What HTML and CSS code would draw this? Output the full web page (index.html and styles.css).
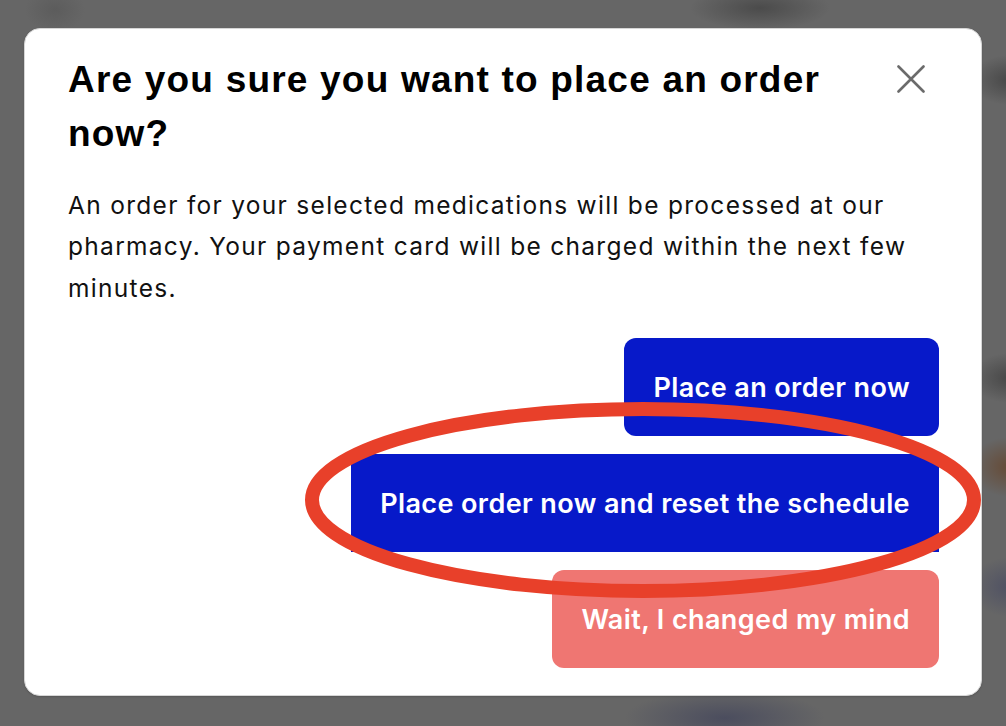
FILE: index.html
```html
<!DOCTYPE html>
<html lang="en">
<head>
<meta charset="utf-8">
<title>Place order</title>
<link rel="stylesheet" href="styles.css">
</head>
<body>
<div class="backdrop">
  <div class="modal" role="dialog">
    <div class="modal-head">
      <h1 class="title">Are you sure you want to place an order now?</h1>
      <button class="close" aria-label="Close">
        <svg width="28" height="28" viewBox="0 0 28 28"><path d="M1.5 1.5 L26.5 26.5 M26.5 1.5 L1.5 26.5" stroke="#6b6b6b" stroke-width="2.6" stroke-linecap="round" fill="none"/></svg>
      </button>
    </div>
    <p class="desc">An order for your selected medications will be processed at our pharmacy. Your payment card will be charged within the next few minutes.</p>
    <div class="actions">
      <button class="btn btn-primary">Place an order now</button>
      <button class="btn btn-primary btn-square">Place order now and reset the schedule</button>
      <button class="btn btn-cancel">Wait, I changed my mind</button>
    </div>
  </div>
</div>
<svg class="annotation" width="1006" height="726" viewBox="0 0 1006 726"><ellipse cx="643" cy="500" rx="331" ry="91" fill="none" stroke="#e8402a" stroke-width="14"/></svg>
</body>
</html>
```
FILE: styles.css
```css
html, body {
  margin: 0;
  padding: 0;
}
body {
  width: 1006px;
  height: 726px;
  overflow: hidden;
  position: relative;
  background-color: #666666;
  background-image:
    radial-gradient(ellipse 70px 22px at 760px 8px, #4b4b4b, rgba(102,102,102,0) 100%),
    radial-gradient(ellipse 30px 22px at 55px 10px, #5c5c5c, rgba(102,102,102,0) 100%),
    radial-gradient(ellipse 40px 25px at 1010px 80px, #474747, rgba(102,102,102,0) 100%),
    radial-gradient(ellipse 40px 25px at 1010px 378px, #474747, rgba(102,102,102,0) 100%),
    radial-gradient(ellipse 40px 30px at 1010px 467px, #664a35, rgba(102,102,102,0) 100%),
    radial-gradient(ellipse 40px 30px at 1010px 587px, #4f5163, rgba(102,102,102,0) 100%),
    radial-gradient(ellipse 100px 28px at 725px 718px, #4b4d5e, rgba(102,102,102,0) 100%);
  font-family: Inter, "Noto Sans", sans-serif;
}
.backdrop {
  padding: 28px 24px 0 24px;
}
.modal {
  box-sizing: border-box;
  width: 958px;
  background: #ffffff;
  border-radius: 16px;
  border: 1px solid #d6d6d6;
  box-shadow: 0 1px 2px rgba(0,0,0,0.15);
  padding: 24px 42px 27px 43px;
}
.modal-head {
  display: flex;
  align-items: flex-start;
  justify-content: space-between;
}
.title {
  margin: 0;
  font-family: "Liberation Sans", Arial, sans-serif;
  font-weight: 700;
  font-size: 37px;
  line-height: 54px;
  color: #000;
  width: 820px;
  letter-spacing: 1.2px;
}
.close {
  border: 0;
  background: transparent;
  padding: 0;
  margin: 12px 14px 0 0;
  width: 28px;
  height: 28px;
  display: flex;
  cursor: pointer;
}
.desc {
  margin: 23.5px 0 0 0;
  font-size: 24.5px;
  letter-spacing: 1.3px;
  line-height: 41.5px;
  color: #111;
}
.actions {
  margin-top: 29px;
  display: flex;
  flex-direction: column;
  align-items: flex-end;
  gap: 18px;
}
.btn {
  border: 0;
  font-family: Inter, "Noto Sans", sans-serif;
  font-weight: 600;
  font-size: 27px;
  letter-spacing: 0.4px;
  line-height: 33px;
  color: #fff;
  padding: 32.5px 29px;
  border-radius: 12px;
  cursor: pointer;
}
.btn-primary {
  background: #0719c9;
}
.btn-square {
  border-radius: 0;
}
.btn-cancel {
  background: #ef7672;
}
.annotation {
  position: absolute;
  left: 0;
  top: 0;
  pointer-events: none;
}
```
